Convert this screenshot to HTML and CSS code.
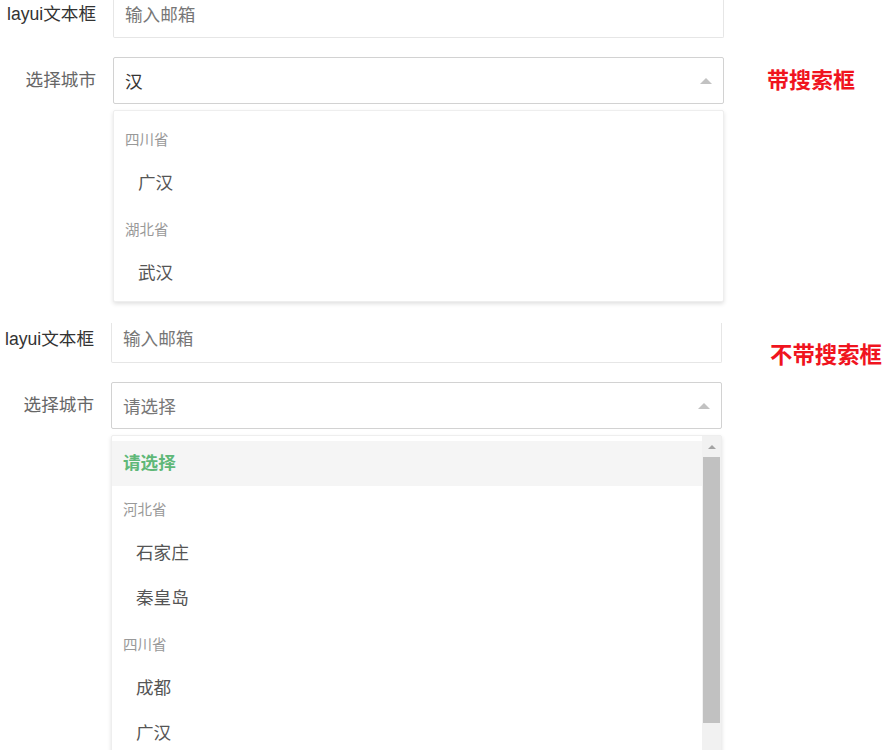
FILE: index.html
```html
<!DOCTYPE html>
<html lang="zh-CN">
<head>
<meta charset="utf-8">
<title>layui select</title>
<link rel="stylesheet" href="styles.css">
</head>
<body>
<div class="page">
  <section class="form s1">
    <div class="row row-input">
      <label class="lbl lbl-dark">layui文本框</label>
      <div class="input"><span class="ph">输入邮箱</span></div>
    </div>
    <div class="row row-select">
      <label class="lbl lbl-sel">选择城市</label>
      <div class="select-col">
        <div class="select"><span class="val">汉</span><i class="tri"></i></div>
        <div class="dl">
          <div class="dl-list">
            <div class="dt">四川省</div>
            <div class="dd">广汉</div>
            <div class="dt">湖北省</div>
            <div class="dd">武汉</div>
          </div>
        </div>
      </div>
      <div class="note">带搜索框</div>
    </div>
  </section>

  <section class="form s2">
    <div class="row row-input row-input2">
      <label class="lbl lbl-dark">layui文本框</label>
      <div class="input"><span class="ph">输入邮箱</span></div>
      <div class="note note2">不带搜索框</div>
    </div>
    <div class="row row-select">
      <label class="lbl lbl-sel">选择城市</label>
      <div class="select-col">
        <div class="select"><span class="ph">请选择</span><i class="tri"></i></div>
        <div class="dl dl-scroll">
          <div class="dl-list">
            <div class="dd dd-this">请选择</div>
            <div class="dt">河北省</div>
            <div class="dd">石家庄</div>
            <div class="dd">秦皇岛</div>
            <div class="dt">四川省</div>
            <div class="dd">成都</div>
            <div class="dd">广汉</div>
          </div>
          <div class="sbar">
            <div class="sbar-btn"><i class="sbar-arrow"></i></div>
            <div class="sbar-thumb"></div>
          </div>
        </div>
      </div>
    </div>
  </section>
</div>
</body>
</html>
```

FILE: styles.css
```css
html, body {
  margin: 0;
  padding: 0;
  background: #fff;
}
body {
  width: 890px;
  height: 750px;
  overflow: hidden;
  font-family: "Liberation Sans", "Noto Sans CJK SC", sans-serif;
  font-size: 17.6px;
  color: #333;
}
.page {
  display: flex;
  flex-direction: column;
}
.form {
  display: flex;
  flex-direction: column;
}
.s2 {
  margin-top: 21px;
  margin-left: -2px;
}
.row {
  display: flex;
  align-items: flex-start;
}
.row-select {
  margin-top: 19px;
}
.lbl {
  width: 113px;
  box-sizing: border-box;
  padding-right: 17px;
  text-align: right;
  white-space: nowrap;
  color: #666;
  line-height: 28px;
}
.lbl-dark {
  color: #333;
}
.lbl-sel {
  line-height: 47px;
}
.input {
  width: 611px;
  height: 38px;
  box-sizing: border-box;
  border: 1px solid #e6e6e6;
  border-top: none;
  border-radius: 0 0 2px 2px;
  padding-left: 11px;
  line-height: 30px;
}
.row-input2 {
  height: 40px;
}
.row-input2 .lbl {
  line-height: 33px;
}
.row-input2 .input {
  height: 40px;
  line-height: 33px;
}
.ph {
  color: #777;
}
.val {
  color: #333;
}
.select-col {
  width: 611px;
  display: flex;
  flex-direction: column;
}
.select {
  height: 47px;
  box-sizing: border-box;
  border: 1px solid #d2d2d2;
  border-radius: 2px;
  padding: 0 11px;
  display: flex;
  align-items: center;
}
.tri {
  margin-left: auto;
  width: 0;
  height: 0;
  border-left: 6.5px solid transparent;
  border-right: 6.5px solid transparent;
  border-bottom: 6px solid #c2c2c2;
}
.dl {
  margin-top: 6px;
  border: 1px solid #eee;
  border-radius: 2px;
  background: #fff;
  box-shadow: 0 2px 4px rgba(0, 0, 0, 0.12);
  display: flex;
}
.dl-list {
  flex: 1;
  padding: 5px 0;
}
.dl-scroll .dl-list {
  padding-bottom: 20px;
}
.dt {
  height: 45px;
  box-sizing: border-box;
  padding-top: 3px;
  line-height: 42px;
  padding-left: 11px;
  font-size: 14.5px;
  color: #999;
}
.dd {
  height: 45px;
  line-height: 45px;
  padding-left: 24px;
  color: #555;
}
.dd-this {
  padding-left: 11px;
  background: #f5f5f5;
  color: #5fb878;
  font-weight: 700;
}
.note {
  margin-left: 43px;
  margin-top: 12px;
  font-size: 22px;
  line-height: 24px;
  font-weight: 700;
  color: #f0141e;
  white-space: nowrap;
}
.note2 {
  margin-left: 48px;
  margin-top: 21px;
  font-size: 22.4px;
}
.sbar {
  width: 19px;
  background: #f1f1f1;
  display: flex;
  flex-direction: column;
  align-items: center;
}
.sbar-btn {
  height: 21px;
  width: 19px;
  display: flex;
  align-items: center;
  justify-content: center;
}
.sbar-arrow {
  width: 0;
  height: 0;
  border-left: 4px solid transparent;
  border-right: 4px solid transparent;
  border-bottom: 4px solid #a3a3a3;
}
.sbar-thumb {
  width: 17px;
  height: 266px;
  background: #c1c1c1;
}
```
